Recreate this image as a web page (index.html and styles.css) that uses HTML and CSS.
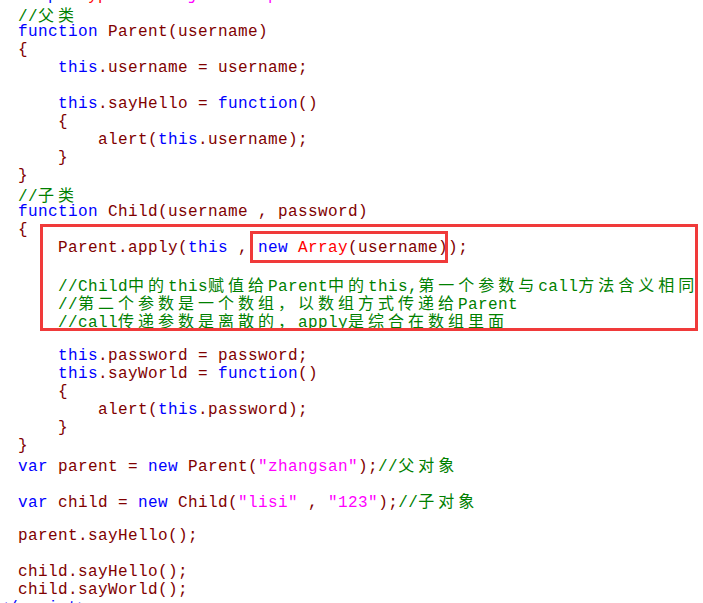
FILE: index.html
```html
<!DOCTYPE html>
<html lang="zh-CN">
<head>
    <meta charset="UTF-8">
    <title>apply 继承示例</title>
    <link rel="stylesheet" href="styles.css">
</head>
<body>
    <div class="page">
        <div class="code">
            <div class="ln"><span class="kw">&lt;script</span> <span class="at">type</span><span class="kw">=</span><span class="str">"text/javascript"</span><span class="kw">&gt;</span></div>
            <div class="ln">  <span class="cm">//<span class="zh">父类</span></span></div>
            <div class="ln">  <span class="kw">function</span> Parent(username)</div>
            <div class="ln">  {</div>
            <div class="ln">      <span class="kw">this</span>.username = username;</div>
            <div class="ln"></div>
            <div class="ln">      <span class="kw">this</span>.sayHello = <span class="kw">function</span>()</div>
            <div class="ln">      {</div>
            <div class="ln">          alert(<span class="kw">this</span>.username);</div>
            <div class="ln">      }</div>
            <div class="ln">  }</div>
            <div class="ln">  <span class="cm">//<span class="zh">子类</span></span></div>
            <div class="ln">  <span class="kw">function</span> Child(username , password)</div>
            <div class="ln">  {</div>
            <div class="ln">      Parent.apply(<span class="kw">this</span> , <span class="kw">new</span> <span class="obj">Array</span>(username));</div>
            <div class="ln"></div>
            <div class="ln">      <span class="cm">//Child<span class="zh">中的</span>this<span class="zh">赋值给</span>Parent<span class="zh">中的</span>this,<span class="zh">第一个参数与</span>call<span class="zh">方法含义相同</span></span></div>
            <div class="ln">      <span class="cm">//<span class="zh">第二个参数是一个数组，以数组方式传递给</span>Parent</span></div>
            <div class="ln">      <span class="cm">//call<span class="zh">传递参数是离散的，</span>apply<span class="zh">是综合在数组里面</span></span></div>
            <div class="ln"></div>
            <div class="ln">      <span class="kw">this</span>.password = password;</div>
            <div class="ln">      <span class="kw">this</span>.sayWorld = <span class="kw">function</span>()</div>
            <div class="ln">      {</div>
            <div class="ln">          alert(<span class="kw">this</span>.password);</div>
            <div class="ln">      }</div>
            <div class="ln">  }</div>
            <div class="ln">  <span class="kw">var</span> parent = <span class="kw">new</span> Parent(<span class="str">"zhangsan"</span>);<span class="cm">//<span class="zh">父对象</span></span></div>
            <div class="ln"></div>
            <div class="ln">  <span class="kw">var</span> child = <span class="kw">new</span> Child(<span class="str">"lisi"</span> , <span class="str">"123"</span>);<span class="cm">//<span class="zh">子对象</span></span></div>
            <div class="ln"></div>
            <div class="ln">  parent.sayHello();</div>
            <div class="ln"></div>
            <div class="ln">  child.sayHello();</div>
            <div class="ln">  child.sayWorld();</div>
            <div class="ln"><span class="kw">&lt;/script&gt;</span></div>
        </div>
        <!-- 标注框 -->
        <div class="mark mark-block"></div>
        <div class="mark mark-array"></div>
    </div>
</body>
</html>
```

FILE: styles.css
```css
body {
    margin: 0;
    background: #ffffff;
}
.page {
    position: relative;
    width: 703px;
    height: 603px;
    overflow: hidden;
}
.code {
    margin: -13px 0 0 -2px;
    font-family: "Liberation Mono", "Noto Sans CJK SC", monospace;
    font-size: 16px;
    letter-spacing: 0.4px;
    color: #800000;
}
.ln {
    height: 18px;
    line-height: 18px;
    white-space: pre;
}
.kw {
    color: #0000ff;
}
.at {
    color: #ff0000;
}
.str {
    color: #ff00ff;
}
.obj {
    color: #ff0000;
}
.cm {
    color: #008000;
}
.zh {
    font-family: "Noto Sans CJK SC", sans-serif;
    letter-spacing: 4px;
}
.mark {
    position: absolute;
    box-sizing: border-box;
    border: 3px solid #f03a3a;
}
.mark-block {
    left: 40px;
    top: 224px;
    width: 658px;
    height: 107px;
}
.mark-array {
    left: 250px;
    top: 231px;
    width: 198px;
    height: 32px;
}
```
